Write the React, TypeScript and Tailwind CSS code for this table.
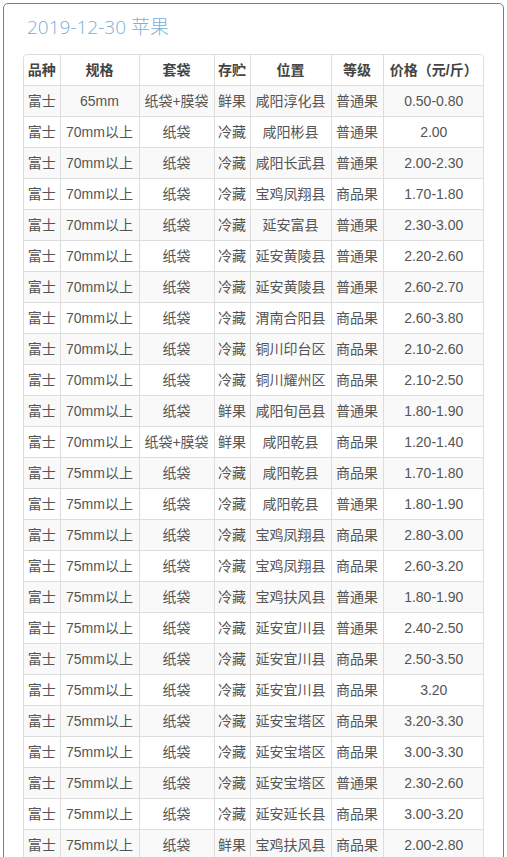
import React from "react";

const rows: string[][] = [
  ["富士", "65mm", "纸袋+膜袋", "鲜果", "咸阳淳化县", "普通果", "0.50-0.80"],
  ["富士", "70mm以上", "纸袋", "冷藏", "咸阳彬县", "普通果", "2.00"],
  ["富士", "70mm以上", "纸袋", "冷藏", "咸阳长武县", "普通果", "2.00-2.30"],
  ["富士", "70mm以上", "纸袋", "冷藏", "宝鸡凤翔县", "商品果", "1.70-1.80"],
  ["富士", "70mm以上", "纸袋", "冷藏", "延安富县", "普通果", "2.30-3.00"],
  ["富士", "70mm以上", "纸袋", "冷藏", "延安黄陵县", "普通果", "2.20-2.60"],
  ["富士", "70mm以上", "纸袋", "冷藏", "延安黄陵县", "普通果", "2.60-2.70"],
  ["富士", "70mm以上", "纸袋", "冷藏", "渭南合阳县", "商品果", "2.60-3.80"],
  ["富士", "70mm以上", "纸袋", "冷藏", "铜川印台区", "商品果", "2.10-2.60"],
  ["富士", "70mm以上", "纸袋", "冷藏", "铜川耀州区", "商品果", "2.10-2.50"],
  ["富士", "70mm以上", "纸袋", "鲜果", "咸阳旬邑县", "普通果", "1.80-1.90"],
  ["富士", "70mm以上", "纸袋+膜袋", "鲜果", "咸阳乾县", "商品果", "1.20-1.40"],
  ["富士", "75mm以上", "纸袋", "冷藏", "咸阳乾县", "商品果", "1.70-1.80"],
  ["富士", "75mm以上", "纸袋", "冷藏", "咸阳乾县", "普通果", "1.80-1.90"],
  ["富士", "75mm以上", "纸袋", "冷藏", "宝鸡凤翔县", "商品果", "2.80-3.00"],
  ["富士", "75mm以上", "纸袋", "冷藏", "宝鸡凤翔县", "商品果", "2.60-3.20"],
  ["富士", "75mm以上", "纸袋", "冷藏", "宝鸡扶风县", "普通果", "1.80-1.90"],
  ["富士", "75mm以上", "纸袋", "冷藏", "延安宜川县", "普通果", "2.40-2.50"],
  ["富士", "75mm以上", "纸袋", "冷藏", "延安宜川县", "商品果", "2.50-3.50"],
  ["富士", "75mm以上", "纸袋", "冷藏", "延安宜川县", "商品果", "3.20"],
  ["富士", "75mm以上", "纸袋", "冷藏", "延安宝塔区", "商品果", "3.20-3.30"],
  ["富士", "75mm以上", "纸袋", "冷藏", "延安宝塔区", "商品果", "3.00-3.30"],
  ["富士", "75mm以上", "纸袋", "冷藏", "延安宝塔区", "普通果", "2.30-2.60"],
  ["富士", "75mm以上", "纸袋", "冷藏", "延安延长县", "商品果", "3.00-3.20"],
  ["富士", "75mm以上", "纸袋", "鲜果", "宝鸡扶风县", "商品果", "2.00-2.80"],
];

const headers = ["品种", "规格", "套袋", "存贮", "位置", "等级", "价格（元/斤）"];
const widths = ["w-[36px]", "w-[79px]", "w-[75px]", "w-[36px]", "w-[81px]", "w-[52px]", "w-[101px]"];

const App = () => {
  return (
    <div className="h-screen overflow-hidden bg-white pt-[3px] pl-[3px] pr-[3px] font-['Liberation_Sans','Noto_Sans_CJK_SC',sans-serif]">
      <div className="rounded-[5px] border border-[#2f9bb3] px-[19px] pt-[9px] pb-5">
        <h2 className="mb-[13px] pl-[4px] font-['Open_Sans','Noto_Sans_CJK_SC',sans-serif] text-[19px] leading-[28px] font-light text-[#78b0da]">
          2019-12-30 苹果
        </h2>
        <div className="overflow-hidden rounded-[4px] border border-[#ddd]">
          <table className="w-full table-fixed border-collapse text-[14px] leading-[20px] text-[#555]">
            <colgroup>
              {widths.map((w, i) => (
                <col key={i} className={w} />
              ))}
            </colgroup>
            <thead>
              <tr className="bg-white">
                {headers.map((h, i) => (
                  <th
                    key={h}
                    className={
                      "whitespace-nowrap px-[2px] py-[5px] text-center font-bold text-[#444] " +
                      (i > 0 ? "border-l border-[#ddd]" : "")
                    }
                  >
                    {h}
                  </th>
                ))}
              </tr>
            </thead>
            <tbody>
              {rows.map((r, ri) => (
                <tr key={ri} className={ri % 2 === 0 ? "bg-[#f9f9f9]" : "bg-white"}>
                  {r.map((c, ci) => (
                    <td
                      key={ci}
                      className={
                        "whitespace-nowrap border-t border-[#ddd] px-[2px] py-[5px] text-center " +
                        (ci > 0 ? "border-l" : "")
                      }
                    >
                      {c}
                    </td>
                  ))}
                </tr>
              ))}
            </tbody>
          </table>
        </div>
      </div>
    </div>
  );
};

export default App;
